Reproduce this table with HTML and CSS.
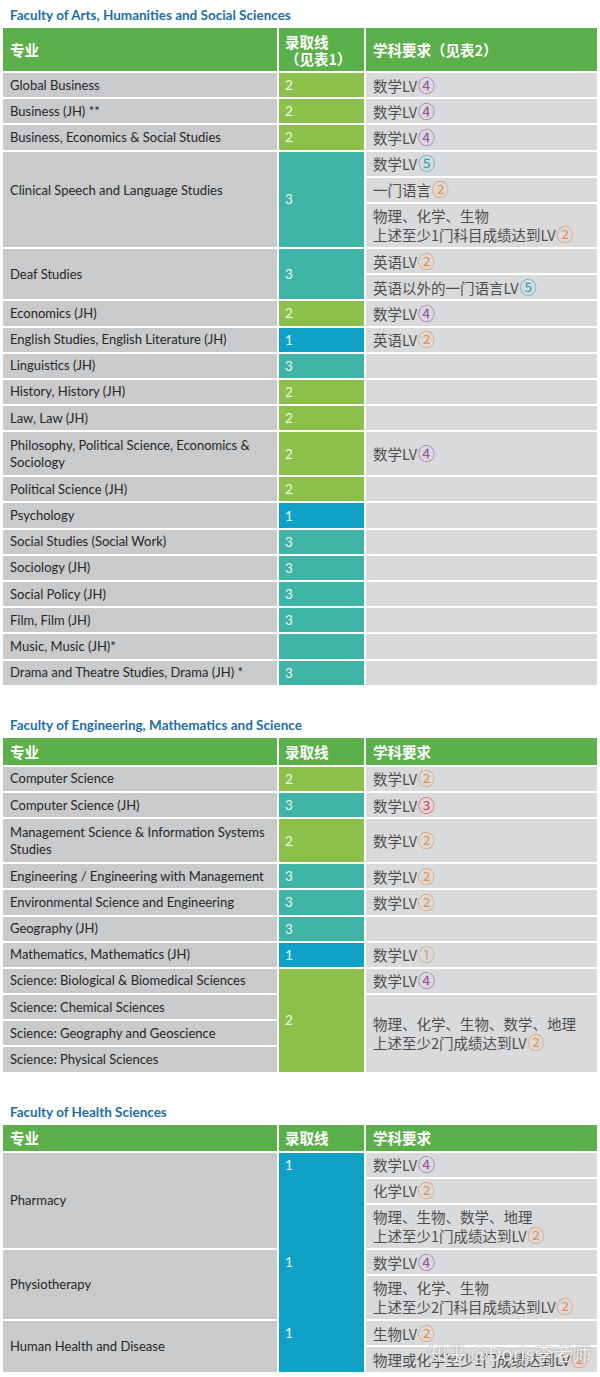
FILE: index.html
```html
<!DOCTYPE html>
<html lang="zh">
<head>
<meta charset="utf-8">
<title>Faculty requirements</title>
<link rel="stylesheet" href="styles.css">
</head>
<body>
<div class="page">

  <section class="faculty first">
    <h2 class="title">Faculty of Arts, Humanities and Social Sciences</h2>
    <div class="tbl tbl-arts">
      <div class="c1 h">专业</div>
      <div class="c2 h"><span class="t">录取线<br>（见表1）</span></div>
      <div class="c3 h">学科要求（见表2）</div>

      <div class="c1">Global Business</div>
      <div class="c2 lime">2</div>
      <div class="c3"><span class="t">数学LV<span class="k4">④</span></span></div>

      <div class="c1">Business (JH) **</div>
      <div class="c2 lime">2</div>
      <div class="c3"><span class="t">数学LV<span class="k4">④</span></span></div>

      <div class="c1">Business, Economics &amp; Social Studies</div>
      <div class="c2 lime">2</div>
      <div class="c3"><span class="t">数学LV<span class="k4">④</span></span></div>

      <div class="c1 s3 raise">Clinical Speech and Language Studies</div>
      <div class="c2 teal s3">3</div>
      <div class="c3"><span class="t">数学LV<span class="k5">⑤</span></span></div>
      <div class="c3"><span class="t">一门语言<span class="k2">②</span></span></div>
      <div class="c3"><span class="t">物理、化学、生物<br>上述至少1门科目成绩达到LV<span class="k2">②</span></span></div>

      <div class="c1 s2">Deaf Studies</div>
      <div class="c2 teal s2">3</div>
      <div class="c3"><span class="t">英语LV<span class="k2">②</span></span></div>
      <div class="c3"><span class="t">英语以外的一门语言LV<span class="k5">⑤</span></span></div>

      <div class="c1">Economics (JH)</div>
      <div class="c2 lime">2</div>
      <div class="c3"><span class="t">数学LV<span class="k4">④</span></span></div>

      <div class="c1">English Studies, English Literature (JH)</div>
      <div class="c2 blue">1</div>
      <div class="c3"><span class="t">英语LV<span class="k2">②</span></span></div>

      <div class="c1">Linguistics (JH)</div>
      <div class="c2 teal">3</div>
      <div class="c3"></div>

      <div class="c1">History, History (JH)</div>
      <div class="c2 lime">2</div>
      <div class="c3"></div>

      <div class="c1">Law, Law (JH)</div>
      <div class="c2 lime">2</div>
      <div class="c3"></div>

      <div class="c1"><span class="t">Philosophy, Political Science, Economics &amp;<br>Sociology</span></div>
      <div class="c2 lime">2</div>
      <div class="c3"><span class="t">数学LV<span class="k4">④</span></span></div>

      <div class="c1">Political Science (JH)</div>
      <div class="c2 lime">2</div>
      <div class="c3"></div>

      <div class="c1">Psychology</div>
      <div class="c2 blue">1</div>
      <div class="c3"></div>

      <div class="c1">Social Studies (Social Work)</div>
      <div class="c2 teal">3</div>
      <div class="c3"></div>

      <div class="c1">Sociology (JH)</div>
      <div class="c2 teal">3</div>
      <div class="c3"></div>

      <div class="c1">Social Policy (JH)</div>
      <div class="c2 teal">3</div>
      <div class="c3"></div>

      <div class="c1">Film, Film (JH)</div>
      <div class="c2 teal">3</div>
      <div class="c3"></div>

      <div class="c1">Music, Music (JH)*</div>
      <div class="c2 teal"></div>
      <div class="c3"></div>

      <div class="c1">Drama and Theatre Studies, Drama (JH) *</div>
      <div class="c2 teal">3</div>
      <div class="c3"></div>
    </div>
  </section>

  <section class="faculty">
    <h2 class="title">Faculty of Engineering, Mathematics and Science</h2>
    <div class="tbl tbl-eng">
      <div class="c1 h">专业</div>
      <div class="c2 h">录取线</div>
      <div class="c3 h">学科要求</div>

      <div class="c1">Computer Science</div>
      <div class="c2 lime">2</div>
      <div class="c3"><span class="t">数学LV<span class="k2">②</span></span></div>

      <div class="c1">Computer Science (JH)</div>
      <div class="c2 teal">3</div>
      <div class="c3"><span class="t">数学LV<span class="k3">③</span></span></div>

      <div class="c1"><span class="t">Management Science &amp; Information Systems<br>Studies</span></div>
      <div class="c2 lime">2</div>
      <div class="c3"><span class="t">数学LV<span class="k2">②</span></span></div>

      <div class="c1">Engineering / Engineering with Management</div>
      <div class="c2 teal">3</div>
      <div class="c3"><span class="t">数学LV<span class="k2">②</span></span></div>

      <div class="c1">Environmental Science and Engineering</div>
      <div class="c2 teal">3</div>
      <div class="c3"><span class="t">数学LV<span class="k2">②</span></span></div>

      <div class="c1">Geography (JH)</div>
      <div class="c2 teal">3</div>
      <div class="c3"></div>

      <div class="c1">Mathematics, Mathematics (JH)</div>
      <div class="c2 blue">1</div>
      <div class="c3"><span class="t">数学LV<span class="k1">①</span></span></div>

      <div class="c1">Science: Biological &amp; Biomedical Sciences</div>
      <div class="c2 lime s4">2</div>
      <div class="c3"><span class="t">数学LV<span class="k4">④</span></span></div>

      <div class="c1">Science: Chemical Sciences</div>
      <div class="c3 s3"><span class="t">物理、化学、生物、数学、地理<br>上述至少2门成绩达到LV<span class="k2">②</span></span></div>

      <div class="c1">Science: Geography and Geoscience</div>

      <div class="c1">Science: Physical Sciences</div>
    </div>
  </section>

  <section class="faculty">
    <h2 class="title">Faculty of Health Sciences</h2>
    <div class="tbl tbl-health">
      <div class="c1 h">专业</div>
      <div class="c2 h">录取线</div>
      <div class="c3 h">学科要求</div>

      <div class="c1 s3">Pharmacy</div>
      <div class="c2 blue s3 top joined">1</div>
      <div class="c3"><span class="t">数学LV<span class="k4">④</span></span></div>
      <div class="c3"><span class="t">化学LV<span class="k2">②</span></span></div>
      <div class="c3"><span class="t">物理、生物、数学、地理<br>上述至少1门成绩达到LV<span class="k2">②</span></span></div>

      <div class="c1 s2">Physiotherapy</div>
      <div class="c2 blue s2 top joined">1</div>
      <div class="c3"><span class="t">数学LV<span class="k4">④</span></span></div>
      <div class="c3"><span class="t">物理、化学、生物<br>上述至少2门科目成绩达到LV<span class="k2">②</span></span></div>

      <div class="c1 s2">Human Health and Disease</div>
      <div class="c2 blue s2 top">1</div>
      <div class="c3"><span class="t">生物LV<span class="k2">②</span></span></div>
      <div class="c3"><span class="t">物理或化学至少1门成绩达到LV<span class="k2">②</span></span></div>
    </div>
  </section>

  <div class="watermark">知乎 @Doris李老师</div>
</div>
</body>
</html>
```

FILE: styles.css
```css
html, body {
  margin: 0;
  padding: 0;
  background: #ffffff;
}

.page {
  position: relative;
  width: 594px;
  padding: 0 3px;
  font-family: Lato, "Noto Sans CJK SC", sans-serif;
}

.faculty {
  margin-top: 31px;
}

.faculty.first {
  margin-top: 6px;
}

.title {
  margin: 0;
  padding: 0 0 4px 7px;
  font-family: Lato, sans-serif;
  font-size: 13.5px;
  font-weight: 700;
  line-height: 18px;
  color: #1d6ea5;
}

.tbl {
  display: grid;
  grid-template-columns: 274px 85px 1fr;
  gap: 2px;
  background: #ffffff;
}

.tbl-arts {
  grid-template-rows: 43px repeat(5, 24.2px) 43px repeat(7, 24.2px) 43px repeat(8, 24.2px);
}

.tbl-eng {
  grid-template-rows: 27px 24.2px 24.2px 43px repeat(8, 24.2px);
}

.tbl-health {
  grid-template-rows: 26px 24.2px 24.2px 43px 24.2px 43px 24.2px 24.2px;
}

.c1, .c2, .c3 {
  display: flex;
  align-items: center;
  box-sizing: border-box;
  min-width: 0;
}

.t {
  display: block;
}

.c1 {
  grid-column: 1;
  background: #c8cacc;
  padding-left: 7px;
  font-family: Lato, sans-serif;
  font-size: 13px;
  line-height: 17px;
  color: #262626;
}

.c2 {
  grid-column: 2;
  padding-left: 6px;
  font-family: Lato, sans-serif;
  font-size: 13.5px;
  color: #f2f6e4;
}

.c3 {
  grid-column: 3;
  background: #d9dadc;
  padding-left: 7px;
  font-family: "Noto Sans CJK SC", sans-serif;
  font-size: 14.5px;
  line-height: 18px;
  color: #4e4e4e;
}

.c1.h, .c2.h, .c3.h {
  background: #5cb04b;
  color: #ffffff;
  font-family: "Noto Sans CJK SC", sans-serif;
  font-size: 14.5px;
  font-weight: 700;
  line-height: 17px;
}

.c2.h .t {
  line-height: 17px;
}

.s2 { grid-row: span 2; }
.s3 { grid-row: span 3; }
.s4 { grid-row: span 4; }

.raise {
  padding-bottom: 18px;
}

.lime { background: #8cc04b; }
.teal { background: #3fb5a7; }
.blue { background: #0ea2c6; }

.top {
  align-items: flex-start;
  line-height: 24px;
}

.joined {
  box-shadow: 0 2px 0 #0ea2c6;
}

.k1, .k2, .k3, .k4, .k5 {
  font-family: "Noto Sans CJK SC", sans-serif;
  font-size: 17px;
  line-height: 18px;
  margin-left: 1px;
}

.k1 { color: #c9a66c; }
.k2 { color: #f08a3d; }
.k3 { color: #e2473a; }
.k4 { color: #9a4ea4; }
.k5 { color: #22abb6; }

.watermark {
  position: absolute;
  left: 428px;
  top: 1334px;
  font-family: "Noto Sans CJK SC", sans-serif;
  font-size: 19px;
  line-height: 26px;
  color: rgba(255, 255, 255, 0.9);
  text-shadow: 0 0 1px rgba(90, 90, 90, 0.55), 0 0 2px rgba(90, 90, 90, 0.25);
  white-space: nowrap;
}
```
